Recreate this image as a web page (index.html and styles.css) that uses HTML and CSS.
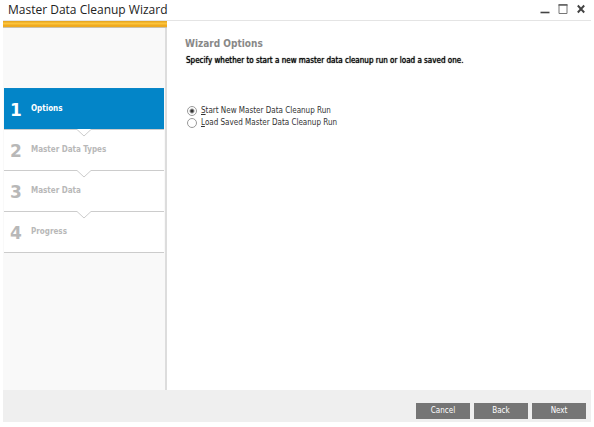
FILE: index.html
```html
<!DOCTYPE html>
<html lang="en">
<head>
<meta charset="utf-8">
<title>Master Data Cleanup Wizard</title>
<meta name="viewport" content="width=device-width, initial-scale=1">
<link rel="stylesheet" href="styles.css">
</head>
<body>
<form class="wizard">
  <header class="titlebar">
    <h1 class="title">Master Data Cleanup Wizard</h1>
    <div class="window-controls">
      <button type="button" class="window-button" aria-label="Minimize">
        <svg viewBox="0 0 10 10"><path d="M0.500 8.500h9" stroke="#444" stroke-width="1.6"/></svg>
      </button>
      <button type="button" class="window-button" aria-label="Maximize">
        <svg viewBox="0 0 10 10"><path d="M1 .5h8v9H1z" fill="none" stroke="#777"/><path d="M.5 1h9" stroke="#666" stroke-width="1.6"/></svg>
      </button>
      <button type="button" class="window-button" aria-label="Close">
        <svg viewBox="0 0 10 10"><path d="M1.8 1.500l6.400 7M8.200 1.500l-6.400 7" stroke="#444" stroke-width="1.9"/></svg>
      </button>
    </div>
  </header>
  <div class="body">
    <nav class="sidebar" aria-label="Steps">
      <ol class="steps">
        <li class="step active" aria-current="step"><span class="number">1</span><span>Options</span></li>
        <li class="step"><span class="number">2</span><span>Master Data Types</span><svg class="notch" viewBox="0 0 16 8"><path d="M0 0h16v1h-1.500L8 7.500L1.500 1H0z" fill="#fff"/><path d="M0 .5h1L8 7l7-6.500h1" fill="none" stroke="#ccc"/></svg></li>
        <li class="step"><span class="number">3</span><span>Master Data</span><svg class="notch" viewBox="0 0 16 8"><path d="M0 0h16v1h-1.500L8 7.500L1.500 1H0z" fill="#fff"/><path d="M0 .5h1L8 7l7-6.500h1" fill="none" stroke="#ccc"/></svg></li>
        <li class="step"><span class="number">4</span><span>Progress</span><svg class="notch" viewBox="0 0 16 8"><path d="M0 0h16v1h-1.500L8 7.500L1.500 1H0z" fill="#fff"/><path d="M0 .5h1L8 7l7-6.500h1" fill="none" stroke="#ccc"/></svg></li>
      </ol>
    </nav>
    <main class="content">
      <h2 class="heading">Wizard Options</h2>
      <p class="description" id="description">Specify whether to start a new master data cleanup run or load a saved one.</p>
      <div class="choices" role="radiogroup" aria-labelledby="description">
        <label class="choice"><input type="radio" name="run" checked><span><u>S</u>tart New Master Data Cleanup Run</span></label>
        <label class="choice"><input type="radio" name="run"><span><u>L</u>oad Saved Master Data Cleanup Run</span></label>
      </div>
    </main>
  </div>
  <footer class="footer">
    <button type="button" class="action">Cancel</button>
    <button type="button" class="action">Back</button>
    <button type="button" class="action">Next</button>
  </footer>
</form>
</body>
</html>
```
FILE: styles.css
```css
* {
  box-sizing: border-box;
}

body {
  margin: 0;
  background: #fff;
  color: #333;
  font: 8px/12px "DejaVu Sans Condensed", "DejaVu Sans", sans-serif;
}

.wizard {
  display: flex;
  flex-direction: column;
  min-height: 100vh;
  padding: 0 3px 5px;
}

.titlebar {
  display: flex;
  justify-content: space-between;
  height: 21px;
  padding: 0 5px;
  border-bottom: 1px solid #e4e4e4;
}

.title {
  margin: 0;
  color: #222;
  font: 12px/20px "Open Sans", sans-serif;
}

.window-controls {
  display: flex;
  gap: 8px;
  padding-top: 4px;
}

.window-button {
  width: 10px;
  height: 10px;
  padding: 0;
  border: 0;
  background: none;
}

.window-button svg {
  display: block;
}

.body {
  display: flex;
  flex: 1;
}

.sidebar {
  width: 164px;
  border-right: 2px solid #ddd;
  background: #f9f9f9;
}

.sidebar::before {
  content: "";
  display: block;
  height: 6px;
  margin-right: -2px;
  border-bottom: 1px solid #c9c2ae;
  background: linear-gradient(#e8a822 0 1px, #fcc43c 2px 3px, #efaa20 4px);
}

.steps {
  margin: 60px 0 0;
  padding: 0 1px;
  list-style: none;
}

.step {
  position: relative;
  display: flex;
  align-items: center;
  height: 41px;
  border-top: 1px solid #ccc;
  background: #fff;
  color: #b8b8b8;
  font-weight: bold;
}

.step.active {
  border-color: #0a86c8;
  background: #0385c8;
  color: #fff;
}

.step:last-child {
  height: 42px;
  border-bottom: 1px solid #ccc;
}

.number {
  width: 27px;
  padding: 2px 0 0 6px;
  font-family: "DejaVu Sans", sans-serif;
  font-size: 17px;
  line-height: 20px;
}

.notch {
  position: absolute;
  top: -1px;
  left: 72px;
  width: 16px;
  height: 8px;
}

.content {
  flex: 1;
  padding: 16px 18px;
}

.heading {
  margin: 0;
  color: #888;
  font-size: 10px;
  line-height: 14px;
}

.description {
  margin: 4px 0 0;
  padding-left: 1px;
  color: #000;
  text-shadow: 0 0 1px #000;
}

.choices {
  margin-top: 38px;
  padding-left: 2px;
}

.choice {
  display: flex;
  align-items: center;
  gap: 4px;
  height: 12px;
}

.choice input {
  appearance: none;
  width: 10px;
  height: 10px;
  margin: 0;
  border: 1px solid #999;
  border-radius: 50%;
  background: #fff;
}

.choice input:checked {
  background: radial-gradient(circle, #333 0 1px, #fff 3px);
}

.footer {
  display: flex;
  justify-content: flex-end;
  gap: 4px;
  padding: 13px 5px 3px;
  background: #efefef;
}

.action {
  width: 54px;
  height: 16px;
  padding: 0;
  border: 0;
  background: #757575;
  color: #fff;
  font: inherit;
}
```
